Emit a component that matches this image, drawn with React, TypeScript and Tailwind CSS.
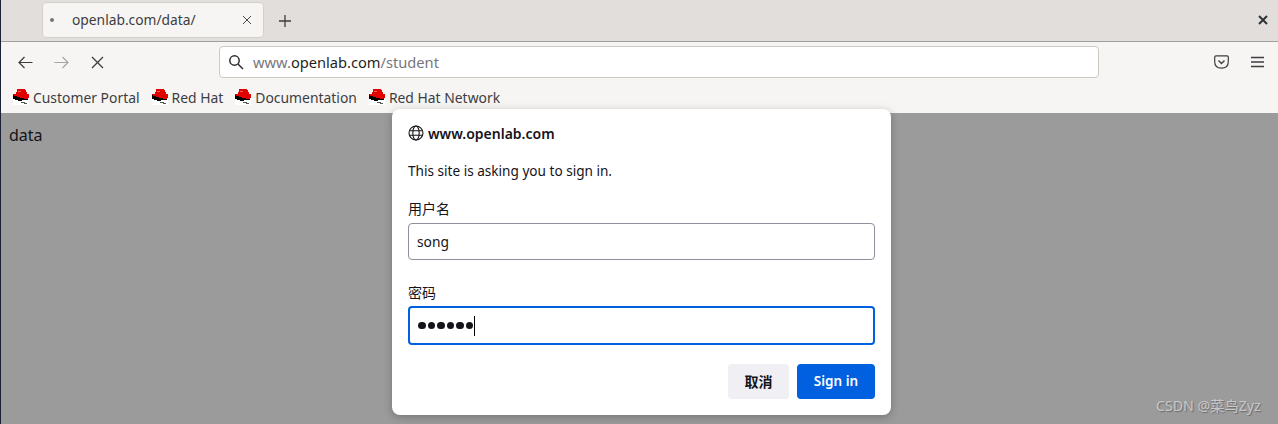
const FONT = "font-['Noto_Sans','Noto_Sans_CJK_SC',sans-serif]";

function RedHat() {
  return (
    <svg width="16" height="16" viewBox="0 0 16 16" className="shrink-0" shapeRendering="crispEdges">
      <rect width="16" height="16" fill="#ffffff" />
      <rect x="0" y="0" width="16" height="10" fill="#f6f5f4" />
      <path d="M4 0 H12 V1 H13 V3 H14 V5 H16 V9 H15 V10 H11 V9 H7 V8 H4 V7 H1 V6 H0 V5 H3 V3 H4 Z" fill="#e00000" />
      <path d="M0 6 H1 V7 H4 V8 H7 V9 H11 V10 H15 V11 H9 V12 H5 V11 H2 V10 H0 Z" fill="#000000" />
      <rect x="5" y="2" width="3" height="1" fill="#ff5a5a" />
      <path d="M8 13 H12 V14 H14 V15 H11 V14 H8 Z" fill="#555555" />
    </svg>
  );
}

function Bookmark({ label }: { label: string }) {
  return (
    <div className="flex items-center gap-[4px]">
      <RedHat />
      <span className="pt-[1px] text-[13.9px] leading-[20px] text-[#3d3d3f] whitespace-nowrap">{label}</span>
    </div>
  );
}

export default function App() {
  return (
    <div className={`${FONT} relative w-[1278px] h-[424px] overflow-hidden flex flex-col bg-[#9b9b9c]`}>
      {/* Tab strip */}
      <div className="h-[42px] shrink-0 bg-[#e1dedb] border-b border-[#a19e9b] flex items-start pl-[42px] pr-[10px]">
        <div className="mt-[2px] w-[222px] h-[36px] bg-[#f6f5f4] rounded-[4px] border border-[#d3d0cc] flex items-center pl-[7px] pr-[11px]">
          <span className="w-[4px] h-[4px] rounded-full bg-[#77767b]" />
          <span className="ml-[18px] text-[13.8px] text-[#3d3d3f] whitespace-nowrap">openlab.com/data/</span>
          <svg width="10" height="10" viewBox="0 0 10 10" className="ml-auto" fill="none" stroke="#4a4a4c" strokeWidth="1">
            <path d="M1 1 L9 9 M9 1 L1 9" />
          </svg>
        </div>
        <svg width="12" height="12" viewBox="0 0 12 12" className="ml-[15px] mt-[15px]" fill="none" stroke="#3d3d3f" strokeWidth="1.3">
          <path d="M6 0 V12 M0 6 H12" />
        </svg>
        <svg width="10" height="10" viewBox="0 0 10 10" className="ml-auto mt-[15px]" fill="none" stroke="#2e3436" strokeWidth="2">
          <path d="M1 1 L9 9 M9 1 L1 9" />
        </svg>
      </div>

      {/* Toolbar */}
      <div className="h-[39px] shrink-0 bg-[#f6f5f4] flex items-center pt-[1px] pl-[18px] pr-[14px]">
        <svg width="15" height="13" viewBox="0 0 15 13" fill="none" stroke="#3d3d3f" strokeWidth="1.2">
          <path d="M14.5 6.5 H1 M6.5 1 L1 6.5 L6.5 12" />
        </svg>
        <svg width="15" height="13" viewBox="0 0 15 13" className="ml-[21px]" fill="none" stroke="#a5a5a7" strokeWidth="1.2">
          <path d="M0.5 6.5 H14 M8.5 1 L14 6.5 L8.5 12" />
        </svg>
        <svg width="13" height="13" viewBox="0 0 13 13" className="ml-[22px]" fill="none" stroke="#3d3d3f" strokeWidth="1.3">
          <path d="M1 1 L12 12 M12 1 L1 12" />
        </svg>
        <div className="ml-[115px] w-[880px] h-[32px] bg-white rounded-[4px] border border-[#cdc9c5] flex items-center pl-[8px]">
          <svg width="16" height="16" viewBox="0 0 16 16" fill="none" stroke="#2e2e30" strokeWidth="1.5">
            <circle cx="6.5" cy="6.5" r="4.7" />
            <path d="M10 10 L15 15" />
          </svg>
          <span className="ml-[9px] pt-[1px] text-[14.65px] text-[#77767b] whitespace-nowrap">
            www.<span className="text-[#1f1f21]">openlab.com</span>/student
          </span>
        </div>
        <svg width="15" height="14" viewBox="0 0 15 14" className="ml-auto" fill="none" stroke="#3d3d3f" strokeWidth="1.2">
          <path d="M2 0.8 H13 Q14.3 0.8 14.3 2 V6.5 Q14.3 13.2 7.5 13.2 Q0.7 13.2 0.7 6.5 V2 Q0.7 0.8 2 0.8 Z" />
          <path d="M4.5 5.5 L7.5 8.5 L10.5 5.5" strokeWidth="1.4" />
        </svg>
        <svg width="13" height="12" viewBox="0 0 13 12" className="ml-[22px]" fill="none" stroke="#3d3d3f" strokeWidth="1.3">
          <path d="M0 1.5 H13 M0 6 H13 M0 10.5 H13" />
        </svg>
      </div>

      {/* Bookmarks */}
      <div className="h-[32px] shrink-0 bg-[#f6f5f4] flex items-center pl-[13px] gap-[12px]">
        <Bookmark label="Customer Portal" />
        <Bookmark label="Red Hat" />
        <Bookmark label="Documentation" />
        <Bookmark label="Red Hat Network" />
      </div>

      {/* Page content */}
      <div className="flex-1 bg-[#9b9b9c] pl-[9px] pt-[10px] text-[16px] leading-[24px] text-[#141416]">data</div>

      {/* Window edge */}
      <div className="absolute left-0 top-0 w-px h-full bg-[#1c2136]" />

      {/* Auth dialog */}
      <div className="absolute left-[392px] top-[109px] w-[499px] h-[306px] bg-white rounded-[8px] shadow-[0_2px_8px_rgba(0,0,0,0.25)] px-[16px] text-[#15141a] flex flex-col">
        <div className="mt-[14px] flex items-center h-[20px]">
          <svg width="16" height="16" viewBox="0 0 16 16" fill="none" stroke="#15141a" strokeWidth="1.1">
            <circle cx="8" cy="8" r="7" />
            <ellipse cx="8" cy="8" rx="3.2" ry="7" />
            <path d="M1 5.8 H15 M1 10.2 H15" />
          </svg>
          <span className="ml-[4px] text-[14px] font-semibold whitespace-nowrap">www.openlab.com</span>
        </div>
        <div className="mt-[18px] text-[13.6px] leading-[20px]">This site is asking you to sign in.</div>
        <div className="mt-[18px] text-[14px] leading-[20px]">用户名</div>
        <div className="mt-[4px] h-[37px] rounded-[4px] border border-[#8f8f9d] flex items-center pl-[8px] pt-[1px] text-[13.8px]">song</div>
        <div className="mt-[23px] text-[14px] leading-[20px]">密码</div>
        <div className="mt-[3px] h-[39px] rounded-[4px] border-2 border-[#0060df] flex items-center pl-[8px]">
          <div className="flex items-center gap-[2px]">
            <span className="w-[7.5px] h-[7.5px] rounded-full bg-[#15141a]" />
            <span className="w-[7.5px] h-[7.5px] rounded-full bg-[#15141a]" />
            <span className="w-[7.5px] h-[7.5px] rounded-full bg-[#15141a]" />
            <span className="w-[7.5px] h-[7.5px] rounded-full bg-[#15141a]" />
            <span className="w-[7.5px] h-[7.5px] rounded-full bg-[#15141a]" />
            <span className="w-[7.5px] h-[7.5px] rounded-full bg-[#15141a]" />
          </div>
          <span className="ml-[1px] w-px h-[20px] bg-black" />
        </div>
        <div className="mt-[19px] flex justify-end gap-[8px]">
          <button className="w-[61px] h-[35px] rounded-[4px] bg-[#f0f0f4] text-[14px] font-semibold text-[#15141a]">取消</button>
          <button className="w-[78px] h-[35px] rounded-[4px] bg-[#0060df] text-[13.5px] font-semibold text-white">Sign in</button>
        </div>
      </div>

      {/* Watermark */}
      <div className="absolute left-[1156px] top-[397px] text-[14.2px] leading-[18px] text-[#c8c8c8] [text-shadow:1px_1px_1px_#6a6a6a] whitespace-nowrap">CSDN @菜鸟Zyz</div>
    </div>
  );
}
